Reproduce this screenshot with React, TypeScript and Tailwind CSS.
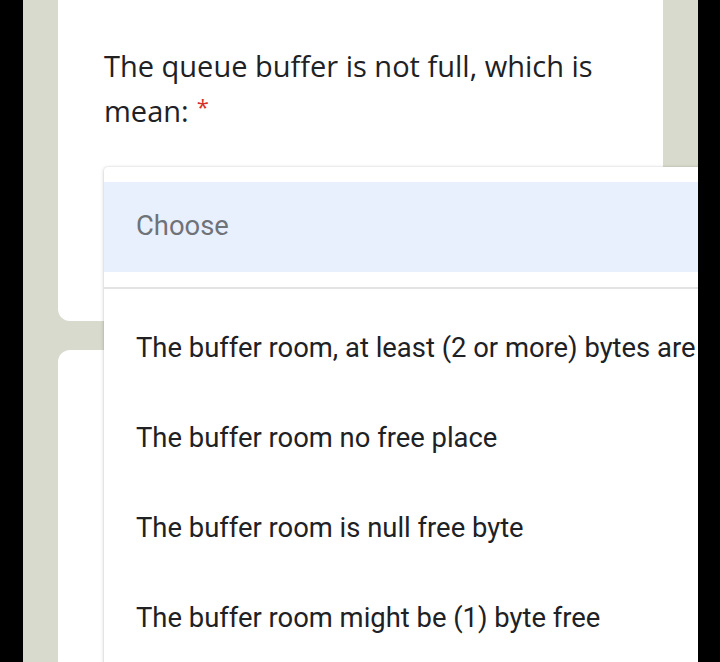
import React from "react";

const options = [
  "The buffer room, at least (2 or more) bytes are",
  "The buffer room no free place",
  "The buffer room is null free byte",
  "The buffer room might be (1) byte free",
];

export default function App() {
  return (
    <div className="flex h-[662px] w-[720px] overflow-hidden bg-black">
      <div className="h-full w-[23px] shrink-0 bg-black" />
      <div className="relative h-full w-[675px] shrink-0 overflow-hidden bg-[#d8dacd]">
        <div className="flex flex-col pl-[35px]">
          <div className="mt-[-12px] h-[333px] w-[605px] rounded-[12px] bg-white pl-[46px] pt-[55px]">
            <p
              className="w-[520px] text-[29px] leading-[45px] text-[#202124]"
              style={{ fontFamily: '"Open Sans", sans-serif' }}
            >
              The queue buffer is not full, which is mean:
              <span className="relative top-[-4px] ml-[8px] align-top text-[22px] leading-[45px] text-[#d93025]">
                *
              </span>
            </p>
          </div>
          <div className="mt-[29px] h-[400px] w-[605px] rounded-[12px] bg-white" />
        </div>

        <div
          className="absolute left-[81px] top-[167px] h-[520px] w-[640px] rounded-[4px] bg-white pt-[15px] shadow-[0_1px_4px_rgba(0,0,0,0.18),0_0_2px_rgba(0,0,0,0.12)]"
          style={{ fontFamily: "Roboto, sans-serif" }}
        >
          <div className="flex h-[90px] items-center bg-[#e9f0fd] pl-[32px] text-[27.4px] text-[#6f7378]">
            Choose
          </div>
          <div className="mt-[15px] h-[2px] bg-[#e3e3e3]" />
          <div className="mt-[15px] flex flex-col">
            {options.map((o) => (
              <div
                key={o}
                className="flex h-[90px] items-center whitespace-nowrap pl-[32px] text-[27.4px] text-[#202124]"
              >
                {o}
              </div>
            ))}
          </div>
        </div>
      </div>
      <div className="h-full w-[22px] shrink-0 bg-black" />
    </div>
  );
}
